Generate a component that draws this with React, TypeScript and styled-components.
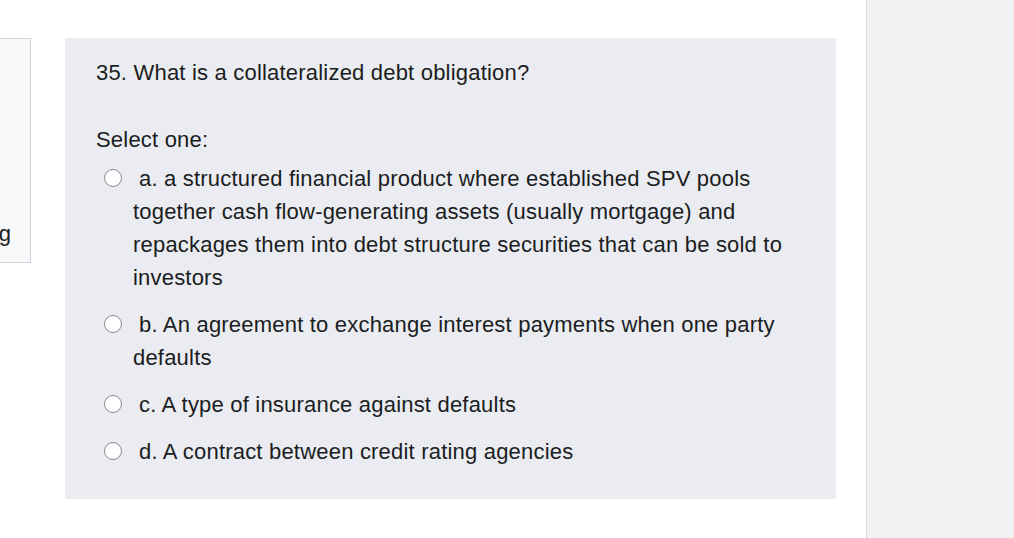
import React from 'react';
import styled, { createGlobalStyle } from 'styled-components';

const GlobalStyle = createGlobalStyle`
  html, body, #root {
    height: 100%;
  }
  body {
    margin: 0;
    background: #ffffff;
    font-family: "Liberation Sans", Arial, sans-serif;
    color: #1a1d21;
    overflow: hidden;
  }
`;

const Page = styled.div`
  display: flex;
  height: 100%;
  width: 100%;
`;

const Main = styled.div`
  display: flex;
  align-items: flex-start;
  width: 866px;
  flex-shrink: 0;
  padding-top: 38px;
  box-sizing: border-box;
  overflow: hidden;
`;

const InfoCard = styled.div`
  width: 150px;
  height: 225px;
  margin-left: -119px;
  flex-shrink: 0;
  display: flex;
  flex-direction: column;
  justify-content: flex-end;
  align-items: flex-end;
  padding: 0 19px 12px 0;
  box-sizing: border-box;
  background: #f8f9fa;
  border: 1px solid #cfd4da;
  font-size: 22px;
  line-height: 33px;
`;

const Panel = styled.div`
  width: 771px;
  margin-left: 34px;
  flex-shrink: 0;
  padding: 18px 31px 31px;
  box-sizing: border-box;
  background: #ebecf1;
  font-size: 22px;
  line-height: 33px;
  letter-spacing: 0.2px;
`;

const QuestionText = styled.div`
  margin-bottom: 34px;
`;

const Prompt = styled.div`
  margin-bottom: 6px;
`;

const Options = styled.div`
  display: flex;
  flex-direction: column;
  gap: 14px;
`;

const OptionRow = styled.div`
  display: flex;
  align-items: flex-start;
`;

const Radio = styled.input.attrs({ type: 'radio' })`
  appearance: none;
  -webkit-appearance: none;
  width: 18px;
  height: 18px;
  margin: 7px 11px 0 8px;
  flex-shrink: 0;
  border: 1px solid #858a92;
  border-radius: 50%;
  background: #ffffff;
  box-sizing: border-box;
`;

const Label = styled.label`
  flex: 1;
  text-indent: 6px;
`;

const Sidebar = styled.aside`
  flex: 1;
  background: #f1f1f1;
  border-left: 1px solid #d8d8d8;
`;

const options = [
  'a. a structured financial product where established SPV pools together cash flow-generating assets (usually mortgage) and repackages them into debt structure securities that can be sold to investors',
  'b. An agreement to exchange interest payments when one party defaults',
  'c. A type of insurance against defaults',
  'd. A contract between credit rating agencies',
];

const App: React.FC = () => {
  return (
    <>
      <GlobalStyle />
      <Page>
        <Main>
          <InfoCard>Flag</InfoCard>
          <Panel>
            <QuestionText>35. What is a collateralized debt obligation?</QuestionText>
            <Prompt>Select one:</Prompt>
            <Options>
              {options.map((text, index) => (
                <OptionRow key={index}>
                  <Radio name="q35" id={`q35-${index}`} />
                  <Label htmlFor={`q35-${index}`}>{text}</Label>
                </OptionRow>
              ))}
            </Options>
          </Panel>
        </Main>
        <Sidebar />
      </Page>
    </>
  );
};

export default App;
